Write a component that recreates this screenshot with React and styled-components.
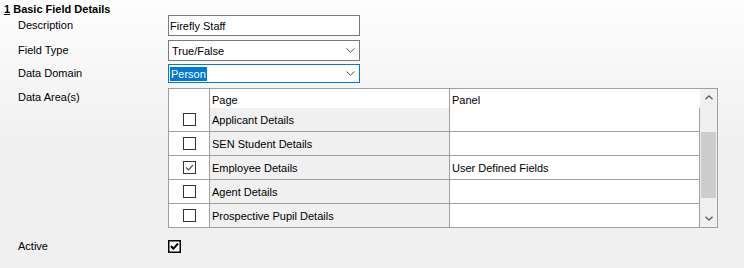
import styled, { createGlobalStyle } from 'styled-components';

const GlobalStyle = createGlobalStyle`
  html, body {
    margin: 0;
    padding: 0;
  }
  body {
    font-family: "Liberation Sans", Arial, sans-serif;
    font-size: 11px;
    color: #000000;
  }
`;

const rows = [
  { page: 'Applicant Details', panel: '', checked: false },
  { page: 'SEN Student Details', panel: '', checked: false },
  { page: 'Employee Details', panel: 'User Defined Fields', checked: true },
  { page: 'Agent Details', panel: '', checked: false },
  { page: 'Prospective Pupil Details', panel: '', checked: false },
];

const Chevron = ({ up, color = '#505050', width = 9, stroke = 1 }) => (
  <svg width={width} height='5' viewBox='0 0 9 5'>
    <path d={up ? 'M0.5 4.5 L4.5 0.8 L8.5 4.5' : 'M0.5 0.5 L4.5 4.2 L8.5 0.5'} fill='none' stroke={color} strokeWidth={stroke} />
  </svg>
);

const GridCheck = ({ checked }) => (
  <svg width='13' height='13' viewBox='0 0 13 13'>
    <rect x='0.5' y='0.5' width='12' height='12' fill='#ffffff' stroke='#333333' />
    {checked && <path d='M3 6.5 L5.5 9 L10 4' fill='none' stroke='#555555' strokeWidth='1.2' />}
  </svg>
);

const FlatCheck = () => (
  <svg width='13' height='13' viewBox='0 0 13 13'>
    <rect x='0.75' y='0.75' width='11.5' height='11.5' fill='#ffffff' stroke='#000000' strokeWidth='1.5' />
    <path d='M3 6 L5.3 8.8 L10 3.5' fill='none' stroke='#000000' strokeWidth='2' />
  </svg>
);

const App = () => {
  return (
    <Page>
      <GlobalStyle />
      <SectionTitle>
        <u>1</u> Basic Field Details
      </SectionTitle>

      <FieldRow $gap={0} $height={21}>
        <Label>Description</Label>
        <TextBox>Firefly Staff</TextBox>
      </FieldRow>

      <FieldRow $gap={4} $height={21}>
        <Label>Field Type</Label>
        <ComboBox>
          <span>True/False</span>
          <Chevron />
        </ComboBox>
      </FieldRow>

      <FieldRow $gap={3} $height={19}>
        <Label>Data Domain</Label>
        <ComboBox $focused>
          <Selected>Person</Selected>
          <Chevron />
        </ComboBox>
      </FieldRow>

      <FieldRow $gap={5} $top>
        <Label $top>Data Area(s)</Label>
        <TableFrame>
          <Grid>
            <CheckCell $head />
            <PageCell $head>Page</PageCell>
            <PanelCell $head>Panel</PanelCell>
            {rows.map(row => (
              <Row key={row.page}>
                <CheckCell>
                  <GridCheck checked={row.checked} />
                </CheckCell>
                <PageCell>{row.page}</PageCell>
                <PanelCell>{row.panel}</PanelCell>
              </Row>
            ))}
          </Grid>
          <ScrollBar>
            <ScrollArrow>
              <Chevron up color='#606060' width={8} stroke={1.6} />
            </ScrollArrow>
            <Track>
              <Thumb />
            </Track>
            <ScrollArrow>
              <Chevron color='#606060' width={8} stroke={1.6} />
            </ScrollArrow>
          </ScrollBar>
        </TableFrame>
      </FieldRow>

      <FieldRow $gap={12} $height={13}>
        <Label>Active</Label>
        <FlatCheck />
      </FieldRow>
    </Page>
  );
};

const Page = styled.div`
  width: 744px;
  height: 268px;
  box-sizing: border-box;
  padding: 3px 0 0 4px;
  background: linear-gradient(to bottom, #fdfdfd 0, #f0f0f0 150px, #f0f0f0 100%);
  overflow: hidden;
`;

const SectionTitle = styled.div`
  font-weight: bold;
  font-size: 11px;
  line-height: 12px;
  height: 12px;
`;

const FieldRow = styled.div`
  display: flex;
  align-items: ${({ $top }) => ($top ? 'flex-start' : 'center')};
  margin-top: ${({ $gap }) => $gap}px;
  height: ${({ $height }) => ($height ? `${$height}px` : 'auto')};
  padding-left: 14px;
`;

const Label = styled.div`
  width: 150px;
  line-height: 13px;
  padding-top: ${({ $top }) => ($top ? '3px' : '0')};
`;

const TextBox = styled.div`
  width: 192px;
  height: 100%;
  box-sizing: border-box;
  border: 1px solid #7a7a7a;
  background: #ffffff;
  padding-left: 1px;
  display: flex;
  align-items: center;
`;

const ComboBox = styled.div`
  width: 192px;
  height: 100%;
  box-sizing: border-box;
  border: 1px solid ${({ $focused }) => ($focused ? '#0078d7' : '#7a7a7a')};
  background: #ffffff;
  padding: 0 4px 0 ${({ $focused }) => ($focused ? '1px' : '3px')};
  display: flex;
  align-items: center;
  justify-content: space-between;
`;

const Selected = styled.span`
  background: #0078d7;
  color: #ffffff;
  line-height: 14px;
  padding: 0 1px;
`;

const TableFrame = styled.div`
  display: flex;
  width: 550px;
  height: 140px;
  box-sizing: border-box;
  border: 1px solid #a0a0a0;
  background: #ffffff;
`;

const Grid = styled.div`
  display: grid;
  grid-template-columns: 41px 240px 250px;
  grid-template-rows: 19px repeat(5, 24px);
  align-content: start;
`;

const Row = styled.div`
  display: contents;
`;

const Cell = styled.div`
  box-sizing: border-box;
  display: flex;
  align-items: center;
  border-bottom: ${({ $head }) => ($head ? 'none' : '1px solid #a0a0a0')};
  white-space: nowrap;
  overflow: hidden;
`;

const CheckCell = styled(Cell)`
  justify-content: center;
  background: #ffffff;
  border-right: 1px solid #a0a0a0;
`;

const PageCell = styled(Cell)`
  padding-left: 2px;
  padding-top: ${({ $head }) => ($head ? '2px' : '0')};
  background: ${({ $head }) => ($head ? '#ffffff' : '#f0f0f0')};
  border-right: 1px solid #a0a0a0;
`;

const PanelCell = styled(Cell)`
  padding-left: 2px;
  padding-top: ${({ $head }) => ($head ? '2px' : '0')};
  background: #ffffff;
  border-right: ${({ $head }) => ($head ? 'none' : '1px solid #a0a0a0')};
`;

const ScrollBar = styled.div`
  width: 17px;
  display: flex;
  flex-direction: column;
  background: #f0f0f0;
`;

const ScrollArrow = styled.div`
  height: 17px;
  display: flex;
  align-items: center;
  justify-content: center;
`;

const Track = styled.div`
  flex: 1;
  padding: 0 1px;
`;

const Thumb = styled.div`
  margin-top: 26px;
  height: 66px;
  background: #cdcdcd;
`;

export default App;
